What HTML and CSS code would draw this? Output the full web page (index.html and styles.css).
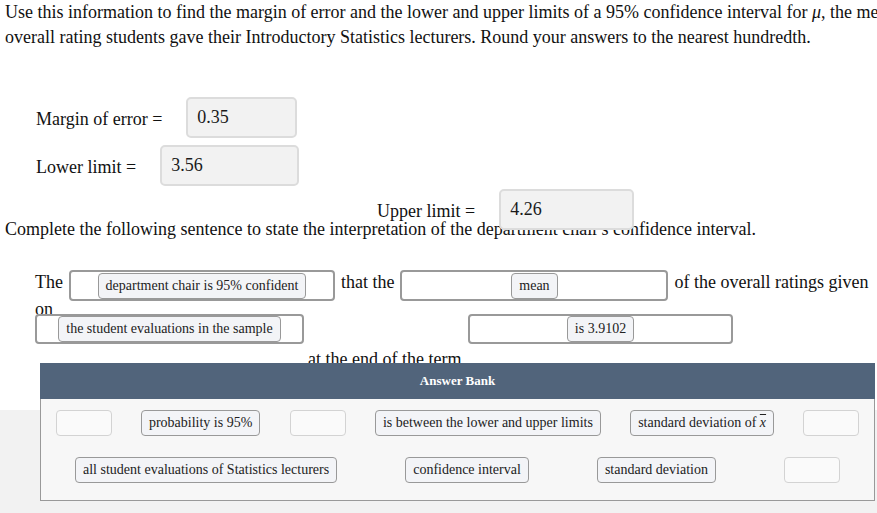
FILE: index.html
```html
<!DOCTYPE html>
<html lang="en">
<head>
    <meta charset="UTF-8">
    <meta name="viewport" content="width=device-width, initial-scale=1.0">
    <title>Confidence Interval Question</title>
    <link rel="stylesheet" href="styles.css">
</head>
<body>
    <div class="question">
        <p class="intro">Use this information to find the margin of error and the lower and upper limits of a 95% confidence interval for <i>μ</i>, the mean overall rating students gave their Introductory Statistics lecturers. Round your answers to the nearest hundredth.</p>

        <div class="limits">
            <div class="limit-row">
                <span class="limit-label">Margin of error =</span>
                <div class="answer-box margin-box">0.35</div>
            </div>
            <div class="limit-row lower-row">
                <span class="limit-label">Lower limit =</span>
                <div class="answer-box lower-box">3.56</div>
            </div>
            <div class="limit-row upper-row">
                <span class="limit-label">Upper limit =</span>
                <div class="answer-box upper-box">4.26</div>
            </div>
        </div>

        <p class="instruction">Complete the following sentence to state the interpretation of the department chair's confidence interval.</p>

        <div class="sentence">
            <div class="sentence-row">
                <span class="word">The</span>
                <div class="drop-zone zone-chair"><span class="chip">department chair is 95% confident</span></div>
                <span class="word">that the</span>
                <div class="drop-zone zone-mean"><span class="chip">mean</span></div>
                <span class="word">of the overall ratings given</span>
            </div>
            <div class="sentence-on">on</div>
            <div class="sentence-row second-row">
                <div class="drop-zone zone-sample"><span class="chip">the student evaluations in the sample</span></div>
                <div class="drop-zone zone-value"><span class="chip">is 3.9102</span></div>
            </div>
            <div class="sentence-end">at the end of the term</div>
        </div>

        <div class="answer-bank">
            <div class="bank-header">Answer Bank</div>
            <div class="bank-body">
                <div class="bank-row">
                    <span class="slot"></span>
                    <span class="chip">probability is 95%</span>
                    <span class="slot"></span>
                    <span class="chip">is between the lower and upper limits</span>
                    <span class="chip">standard deviation of <span class="xbar">x</span></span>
                    <span class="slot"></span>
                </div>
                <div class="bank-row">
                    <span class="chip">all student evaluations of Statistics lecturers</span>
                    <span class="chip">confidence interval</span>
                    <span class="chip">standard deviation</span>
                    <span class="slot"></span>
                </div>
            </div>
        </div>
    </div>
    <div class="page-bottom"></div>
</body>
</html>
```

FILE: styles.css
```css
html, body {
    margin: 0;
    overflow: hidden;
}

body {
    font-family: "Liberation Serif", "Times New Roman", serif;
    font-size: 18px;
    color: #111;
    background-color: #fff;
}

.intro {
    margin: 0;
    padding: 0 5px;
    width: 910px;
    line-height: 25px;
}

/* margin of error / limits */
.limits {
    margin-top: 47px;
    padding-left: 36px;
}

.limit-row {
    display: flex;
    align-items: flex-start;
    gap: 24px;
    margin-bottom: 7px;
}

.limit-label {
    margin-top: 10px;
    line-height: 25px;
}

.lower-row {
    margin-bottom: 3px;
}

.upper-row {
    height: 28px;
    margin-left: 341px;
    margin-bottom: 0;
}

.answer-box {
    box-sizing: border-box;
    height: 41px;
    padding: 8px 9px 0;
    line-height: 20px;
    background-color: #f2f2f2;
    border: 2px solid #dcdcdc;
    border-radius: 5px;
    color: #1a1a1a;
}

.margin-box {
    width: 111px;
}

.lower-box {
    width: 139px;
}

.upper-box {
    width: 135px;
    position: relative;
    z-index: 1;
}

.instruction {
    margin: 0;
    padding: 0 5px;
    line-height: 25px;
}

/* fill-in sentence */
.sentence {
    margin-top: 28px;
    padding-left: 35px;
}

.sentence-row {
    display: flex;
    align-items: flex-start;
    gap: 6px;
    line-height: 25px;
}

.second-row {
    gap: 164px;
}

.sentence-on {
    line-height: 17px;
    margin-bottom: -4px;
}

.sentence-end {
    margin-top: 5px;
    padding-left: 273px;
    line-height: 20px;
}

.drop-zone {
    box-sizing: border-box;
    height: 31px;
    display: flex;
    align-items: center;
    justify-content: center;
    background-color: #fff;
    border: 2px solid #999;
    border-radius: 4px;
}

.second-row .drop-zone {
    height: 30px;
}

.zone-chair {
    width: 266px;
}

.zone-mean {
    width: 268px;
}

.zone-sample {
    width: 269px;
}

.zone-value {
    width: 265px;
}

.chip {
    display: inline-block;
    box-sizing: border-box;
    height: 26px;
    padding: 0 7px;
    line-height: 24px;
    font-size: 14px;
    color: #222;
    white-space: nowrap;
    background-color: #f3f4f7;
    border: 1px solid #999;
    border-radius: 4px;
}

.xbar {
    font-style: italic;
    text-decoration: overline;
}

/* answer bank */
.answer-bank {
    position: relative;
    z-index: 1;
    width: 835px;
    margin: -6px 0 -91px 40px;
}

.bank-header {
    height: 36px;
    display: flex;
    align-items: center;
    justify-content: center;
    background-color: #51647b;
    color: #fff;
    font-size: 13px;
    font-weight: bold;
}

.bank-body {
    display: flex;
    flex-direction: column;
    gap: 21px;
    padding: 11px 0 17px;
    background-color: #f7f7f7;
    border: 1px solid #999;
    border-top: none;
}

.bank-row {
    display: flex;
    justify-content: space-around;
    align-items: center;
}

.slot {
    box-sizing: border-box;
    width: 56px;
    height: 26px;
    background-color: #fafafa;
    border: 1px solid #d3d3d3;
    border-radius: 4px;
}

.page-bottom {
    height: 103px;
    background-color: #f2f2f2;
}
```
